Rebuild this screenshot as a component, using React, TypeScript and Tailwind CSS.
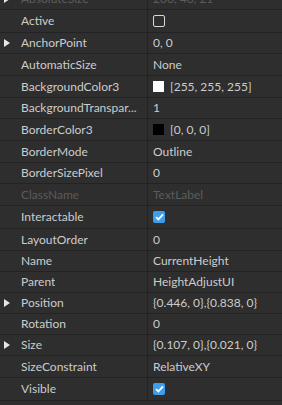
import React from "react";

type Row = {
  name: string;
  value?: string;
  h: string;
  arrow?: boolean;
  disabled?: boolean;
  kind?: "check" | "checked" | "color";
  swatch?: string;
};

const rows: Row[] = [
  { name: "AbsoluteSize", value: "200, 40, 21", h: "h-[22px]", arrow: true, disabled: true },
  { name: "Active", h: "h-[23px]", kind: "check" },
  { name: "AnchorPoint", value: "0, 0", h: "h-[21px]", arrow: true },
  { name: "AutomaticSize", value: "None", h: "h-[22px]" },
  { name: "BackgroundColor3", value: "[255, 255, 255]", h: "h-[22px]", kind: "color", swatch: "bg-white" },
  { name: "BackgroundTranspar...", value: "1", h: "h-[21px]" },
  { name: "BorderColor3", value: "[0, 0, 0]", h: "h-[22px]", kind: "color", swatch: "bg-black" },
  { name: "BorderMode", value: "Outline", h: "h-[22px]" },
  { name: "BorderSizePixel", value: "0", h: "h-[21px]" },
  { name: "ClassName", value: "TextLabel", h: "h-[22px]", disabled: true },
  { name: "Interactable", h: "h-[23px]", kind: "checked" },
  { name: "LayoutOrder", value: "0", h: "h-[22px]" },
  { name: "Name", value: "CurrentHeight", h: "h-[21px]" },
  { name: "Parent", value: "HeightAdjustUI", h: "h-[21px]" },
  { name: "Position", value: "{0.446, 0},{0.838, 0}", h: "h-[21px]", arrow: true },
  { name: "Rotation", value: "0", h: "h-[21px]" },
  { name: "Size", value: "{0.107, 0},{0.021, 0}", h: "h-[21px]", arrow: true },
  { name: "SizeConstraint", value: "RelativeXY", h: "h-[22px]" },
  { name: "Visible", h: "h-[23px]", kind: "checked" },
];

function Arrow() {
  return (
    <svg width="6" height="8" viewBox="0 0 6 8" className="shrink-0">
      <path d="M0 0 L6 4 L0 8 Z" fill="#e6e6e6" />
    </svg>
  );
}

function Value({ r }: { r: Row }) {
  if (r.kind === "check") {
    return <div className="h-[12px] w-[12px] rounded-[2px] border border-[#d8d8d8]" />;
  }
  if (r.kind === "checked") {
    return (
      <div className="flex h-[12px] w-[12px] items-center justify-center rounded-[2px] bg-[#3b9ff0]">
        <svg width="9" height="8" viewBox="0 0 9 8">
          <path d="M1 4.2 L3.4 6.4 L8 1.4" fill="none" stroke="#ffffff" strokeWidth="1.8" />
        </svg>
      </div>
    );
  }
  if (r.kind === "color") {
    return (
      <div className="flex items-center gap-[6px]">
        <div className={`h-[11px] w-[11px] ${r.swatch}`} />
        <span>{r.value}</span>
      </div>
    );
  }
  return <span className={r.disabled ? "text-[#5c5c5c]" : ""}>{r.value}</span>;
}

export default function App() {
  return (
    <main
      className="h-[405px] w-[282px] overflow-hidden bg-[#2e2e2e] text-[12px] text-[#cccccc]"
      style={{ fontFamily: "Lato, 'Open Sans', sans-serif" }}
    >
      <div className="-mt-[12px]">
        {rows.map((r) => (
          <div key={r.name} className={`flex ${r.h} border-b border-[#232323]`}>
            {/* name column */}
            <div className="flex w-[148px] shrink-0 items-center border-r border-[#232323]">
              <div className="flex w-[21px] shrink-0 justify-start pl-[4px]">
                {r.arrow && <Arrow />}
              </div>
              <span className={`truncate ${r.disabled ? "text-[#5c5c5c]" : ""}`}>{r.name}</span>
            </div>
            {/* value column */}
            <div className="flex min-w-0 flex-1 items-center pl-[5px]">
              <Value r={r} />
            </div>
          </div>
        ))}
      </div>
    </main>
  );
}
